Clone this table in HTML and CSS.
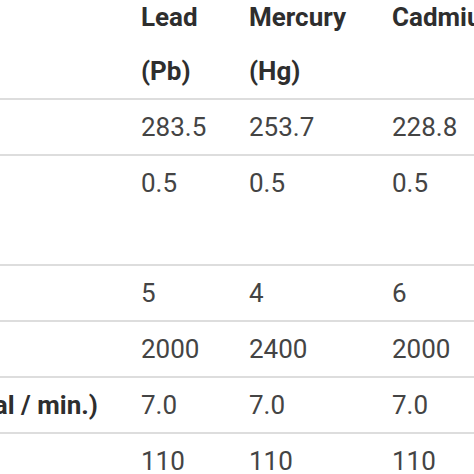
FILE: index.html
```html
<!DOCTYPE html>
<html lang="en">
<head>
<meta charset="utf-8">
<title>Lamp parameters</title>
<link rel="stylesheet" href="styles.css">
</head>
<body>
<table class="params">
  <colgroup>
    <col class="col-label">
    <col class="col-pb">
    <col class="col-hg">
    <col class="col-cd">
  </colgroup>
  <thead>
    <tr>
      <th class="label"></th>
      <th>Lead (Pb)</th>
      <th>Mercury (Hg)</th>
      <th class="nowrap">Cadmium (Cd)</th>
    </tr>
  </thead>
  <tbody>
    <tr><th class="label">Wavelength (nm)</th><td>283.5</td><td>253.7</td><td>228.8</td></tr>
    <tr><th class="label">Slit width<br>(nm)</th><td>0.5</td><td>0.5</td><td>0.5</td></tr>
    <tr><th class="label">Current (mA)</th><td>5</td><td>4</td><td>6</td></tr>
    <tr><th class="label">Time (ms)</th><td>2000</td><td>2400</td><td>2000</td></tr>
    <tr><th class="label">Argon flow (normal / min.)</th><td>7.0</td><td>7.0</td><td>7.0</td></tr>
    <tr><th class="label">Temp. (°C)</th><td>110</td><td>110</td><td>110</td></tr>
  </tbody>
</table>
</body>
</html>
```

FILE: styles.css
```css
html, body {
  margin: 0;
  padding: 0;
  background: #ffffff;
  overflow: hidden;
}

.params {
  font-family: Roboto, "Noto Sans", sans-serif;
  font-size: 26px;
  line-height: 54px;
  color: #444444;
  border-collapse: collapse;
  table-layout: fixed;
  width: 800px;
  margin-top: -10px;
  margin-left: -210px;
}

.col-label { width: 351px; }
.col-pb { width: 108px; }
.col-hg { width: 143px; }
.col-cd { width: 198px; }

.params tr {
  border-bottom: 2px solid #dddddd;
}

.params th,
.params td {
  padding: 0;
  text-align: left;
  vertical-align: top;
}

.params th {
  font-weight: 700;
  color: #2e2e2e;
}

.params td {
  font-weight: 400;
}

.nowrap {
  white-space: nowrap;
}
```
